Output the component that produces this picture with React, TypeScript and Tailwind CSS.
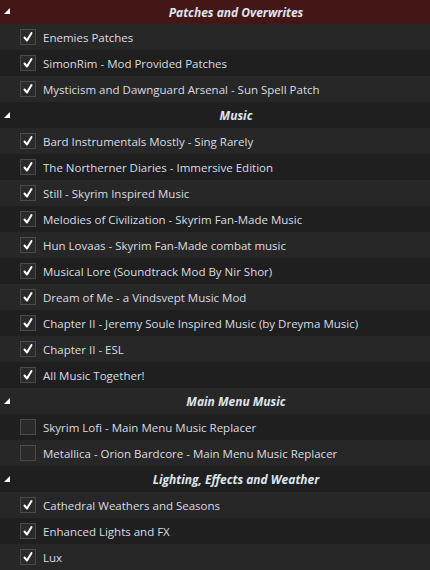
import React from "react";

type Row = { type: "header"; label: string; red?: boolean; first?: boolean } | { type: "item"; label: string; checked: boolean };

const rows: Row[] = [
  { type: "header", label: "Patches and Overwrites", red: true, first: true },
  { type: "item", label: "Enemies Patches", checked: true },
  { type: "item", label: "SimonRim - Mod Provided Patches", checked: true },
  { type: "item", label: "Mysticism and Dawnguard Arsenal - Sun Spell Patch", checked: true },
  { type: "header", label: "Music" },
  { type: "item", label: "Bard Instrumentals Mostly - Sing Rarely", checked: true },
  { type: "item", label: "The Northerner Diaries - Immersive Edition", checked: true },
  { type: "item", label: "Still - Skyrim Inspired Music", checked: true },
  { type: "item", label: "Melodies of Civilization - Skyrim Fan-Made Music", checked: true },
  { type: "item", label: "Hun Lovaas - Skyrim Fan-Made combat music", checked: true },
  { type: "item", label: "Musical Lore (Soundtrack Mod By Nir Shor)", checked: true },
  { type: "item", label: "Dream of Me - a Vindsvept Music Mod", checked: true },
  { type: "item", label: "Chapter II - Jeremy Soule Inspired Music (by Dreyma Music)", checked: true },
  { type: "item", label: "Chapter II - ESL", checked: true },
  { type: "item", label: "All Music Together!", checked: true },
  { type: "header", label: "Main Menu Music" },
  { type: "item", label: "Skyrim Lofi - Main Menu Music Replacer", checked: false },
  { type: "item", label: "Metallica - Orion Bardcore - Main Menu Music Replacer", checked: false },
  { type: "header", label: "Lighting, Effects and Weather" },
  { type: "item", label: "Cathedral Weathers and Seasons", checked: true },
  { type: "item", label: "Enhanced Lights and FX", checked: true },
  { type: "item", label: "Lux", checked: true },
];

function Triangle() {
  return (
    <svg width="6" height="6" viewBox="0 0 6 6" className="block">
      <polygon points="6,0 6,6 0,6" fill="#ffffff" />
    </svg>
  );
}

function Check({ checked }: { checked: boolean }) {
  return (
    <div className="w-[16px] h-[16px] border border-[#4a4a4a] bg-[#2a2a2a] flex items-center justify-center shrink-0">
      {checked && (
        <svg width="14" height="14" viewBox="0 0 14 14">
          <path d="M3.5 7.5 L6 10.5 L10.5 3" stroke="#ffffff" strokeWidth="2" fill="none" strokeLinecap="round" strokeLinejoin="round" />
        </svg>
      )}
    </div>
  );
}

export default function App() {
  return (
    <div
      className="w-[430px] h-[570px] overflow-hidden bg-[#1f1f1f]"
      style={{ fontFamily: '"Open Sans", "Noto Sans", sans-serif' }}
    >
      {rows.map((r, i) => {
        const light = i % 2 === 1;
        const bg = r.type === "header" && r.red ? "bg-[#441616]" : light ? "bg-[#272727]" : "bg-[#1f1f1f]";
        if (r.type === "header") {
          return (
            <div key={i} className={`${bg} relative flex items-center ${r.first ? "h-[24px]" : "h-[26px]"}`}>
              <div className={`w-[42px] pl-[4px] flex items-center ${r.first ? "pb-[2px]" : ""}`}>
                <Triangle />
              </div>
              <div className="flex-1 text-center text-[12px] pt-[1px] font-bold italic text-[#dfe5ee]">{r.label}</div>
            </div>
          );
        }
        return (
          <div key={i} className={`${bg} h-[26px] flex items-center`}>
            <div className="w-[43px] pl-[20px] flex items-center">
              <Check checked={r.checked} />
            </div>
            <div className="text-[11.5px] pt-[2px] text-[#d9dde2] whitespace-nowrap">{r.label}</div>
          </div>
        );
      })}
    </div>
  );
}
